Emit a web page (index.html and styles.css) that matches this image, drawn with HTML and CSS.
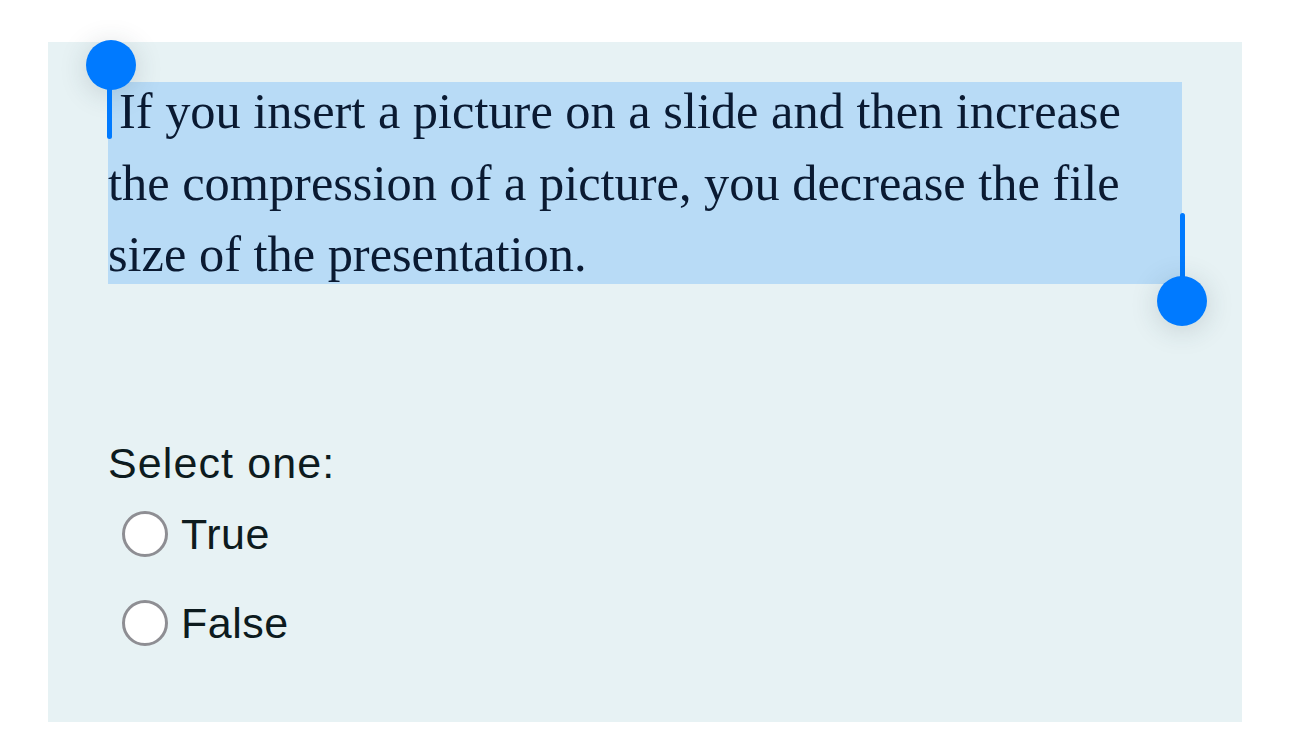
FILE: index.html
```html
<!DOCTYPE html>
<html lang="en">
<head>
<meta charset="utf-8">
<title>Question</title>
<link rel="stylesheet" href="styles.css">
</head>
<body>
  <div class="panel">
    <div class="selection">
      <p class="question">If you insert a picture on a slide and then increase the compression of a picture, you decrease the file size of the presentation.</p>
    </div>
    <div class="answer">
      <div class="prompt">Select one:</div>
      <label class="option"><span class="radio"></span><span class="opt-label">True</span></label>
      <label class="option"><span class="radio"></span><span class="opt-label">False</span></label>
    </div>
    <div class="handle handle-start"><span class="knob"></span><span class="stem"></span></div>
    <div class="handle handle-end"><span class="stem"></span><span class="knob"></span></div>
  </div>
</body>
</html>
```
FILE: styles.css
```css
html, body {
  margin: 0;
  padding: 0;
  background: #ffffff;
}
body {
  padding-top: 42px;
}
.panel {
  position: relative;
  margin-left: 48px;
  width: 1194px;
  height: 680px;
  box-sizing: border-box;
  padding: 40px 60px 0 60px;
  background: #e7f2f4;
}
.selection {
  display: flow-root;
  height: 202px;
  background: #b8dbf6;
}
.question {
  margin: -5.6px 0 0 0;
  font-family: "Liberation Serif", "Times New Roman", serif;
  font-size: 50.4px;
  line-height: 71.5px;
  color: #0a1a32;
  text-indent: 11px;
}
.answer {
  padding-top: 151.8px;
  font-family: "Liberation Sans", Arial, sans-serif;
  color: #0d1b1e;
}
.prompt {
  font-size: 43px;
  line-height: 54px;
  letter-spacing: 1.1px;
}
.option {
  display: flex;
  align-items: center;
  height: 89px;
  padding-left: 14px;
  font-size: 43px;
  letter-spacing: 0.5px;
}
.radio {
  width: 40px;
  height: 40px;
  border: 3.5px solid #8e8e93;
  border-radius: 50%;
  background: #ffffff;
  margin-right: 13px;
  flex: none;
}
.handle {
  position: absolute;
  display: flex;
  flex-direction: column;
  align-items: center;
  width: 50px;
}
.handle-start {
  left: 38px;
  top: -2px;
}
.handle-end {
  left: 1109px;
  top: 171px;
}
.knob {
  width: 50px;
  height: 50px;
  border-radius: 50%;
  background: #007aff;
  box-shadow: 0 4px 28px rgba(40, 60, 70, 0.18);
}
.stem {
  width: 5px;
  background: #007aff;
  border-radius: 3px;
}
.handle-start .stem {
  height: 52px;
  margin-top: -3px;
  margin-left: -4px;
}
.handle-end .stem {
  height: 66px;
  margin-bottom: -3px;
}
```
